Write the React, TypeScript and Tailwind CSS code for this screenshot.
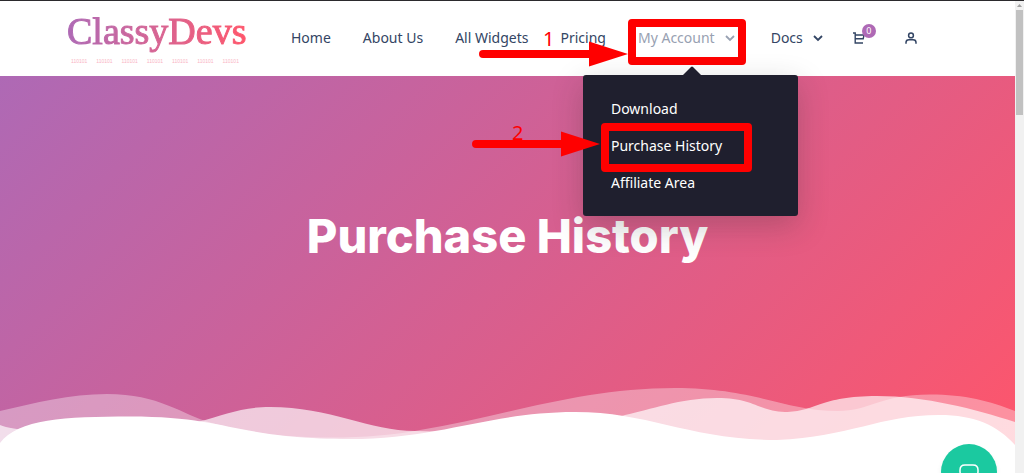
import type { ReactNode } from "react";

const accountLinks = ["Download", "Purchase History", "Affiliate Area"];

function Chevron() {
  return (
    <svg className="h-[10px] w-[10px]" viewBox="0 0 10 10" fill="none" stroke="currentColor" strokeWidth="1.8" aria-hidden="true">
      <path d="M1 3l4 4 4-4" />
    </svg>
  );
}

type ArrowProps = {
  label: string;
  className: string;
  length: number;
  labelClassName: string;
};

function Arrow({ label, className, length, labelClassName }: ArrowProps) {
  return (
    <div className={`pointer-events-none absolute z-20 text-[#ff0000] ${className}`}>
      <span className={`absolute text-[20px] leading-6 ${labelClassName}`}>{label}</span>
      <svg width={length} height="26" viewBox={`0 0 ${length} 26`} fill="currentColor" aria-hidden="true">
        <path d={`M4 9H${length - 39}V0.5L${length} 13L${length - 39} 25.5V17H4A4 4 0 0 1 4 9Z`} />
      </svg>
    </div>
  );
}

function Logo() {
  return (
    <a href="#" className="block w-[180px] shrink-0 pb-1" aria-label="ClassyDevs">
      <span className="block bg-linear-to-r from-[#ae69b5] to-[#ff556a] bg-clip-text font-['Liberation_Serif',serif] text-[38px] leading-[44px] text-transparent [-webkit-text-stroke:1px_transparent]">
        ClassyDevs
      </span>
      <span className="flex justify-between pt-1 pr-2 pl-1 font-['Liberation_Sans',sans-serif] text-[5px] leading-[8px] text-[#f9b4c4]">
        {[0, 1, 2, 3, 4, 5, 6].map((n) => (
          <span key={n}>110101</span>
        ))}
      </span>
    </a>
  );
}

function NavLink({ children }: { children: ReactNode }) {
  return (
    <a href="#" className="hover:text-[#9aa3b5]">
      {children}
    </a>
  );
}

function AccountMenu() {
  return (
    <div className="relative">
      <button type="button" aria-expanded="true" className="flex items-center gap-2.5 pr-1 text-[#98a1b2]">
        My Account
        <Chevron />
      </button>
      <div className="pointer-events-none absolute -top-[7px] -left-[10px] h-[46px] w-[118px] rounded-[4px] border-8 border-[#ff0000]" />
      <Arrow label="1" length={149} className="top-[15px] -left-[159px]" labelClassName="-top-[14px] left-16" />

      <div className="absolute top-[49px] -left-[55px] w-[215px] rounded-[3px] bg-[#1f1f2e] px-7 py-[15px] text-white shadow-[0_10px_30px_rgba(45,45,45,0.25)]">
        <svg className="absolute -top-[9px] left-[99px]" width="20" height="10" viewBox="0 0 20 10" fill="#1f1f2e" aria-hidden="true">
          <path d="M0 10L9 1Q10 0 11 1L20 10Z" />
        </svg>
        <ul>
          {accountLinks.map((link) => (
            <li key={link} className="py-[7px]">
              <a href="#" className="block leading-[23px]">
                {link}
              </a>
            </li>
          ))}
        </ul>
        <div className="pointer-events-none absolute top-12 left-[18px] h-[49px] w-[151px] rounded-[4px] border-8 border-[#ff0000]" />
        <Arrow label="2" length={128} className="top-14 -left-[111px]" labelClassName="-top-[10px] left-10" />
      </div>
    </div>
  );
}

function Header() {
  return (
    <header className="relative z-10 flex h-[76px] items-center border-t border-[#2b2a2d] bg-white pl-[67px] whitespace-nowrap">
      <Logo />
      <nav className="ml-11 flex items-center gap-8 pb-0.5 text-[14px] leading-6 text-[#334564]">
        <NavLink>Home</NavLink>
        <NavLink>About Us</NavLink>
        <NavLink>All Widgets</NavLink>
        <NavLink>Pricing</NavLink>
        <AccountMenu />
        <button type="button" className="flex items-center gap-2.5">
          Docs
          <Chevron />
        </button>
        <div className="-ml-0.5 flex items-center gap-10">
          <a href="#" aria-label="Cart" className="relative">
            <svg width="12" height="12" viewBox="0 0 12 12" fill="none" stroke="currentColor" strokeWidth="1.4" aria-hidden="true">
              <path d="M0 1H2.2V11H10M2.2 3H11L10.2 6.8H2.2" />
            </svg>
            <span className="absolute -top-2 left-[9px] flex h-[14px] w-[14px] items-center justify-center rounded-full bg-[#ae69b5] text-[9px] text-white">
              0
            </span>
          </a>
          <a href="#" aria-label="Profile">
            <svg width="12" height="12" viewBox="0 0 12 12" fill="none" stroke="currentColor" strokeWidth="1.5" aria-hidden="true">
              <circle cx="6" cy="3.4" r="2.4" />
              <path d="M1 11.8V10.5Q1 7.8 4 7.8H8Q11 7.8 11 10.5V11.8" />
            </svg>
          </a>
        </div>
      </nav>
    </header>
  );
}

function Waves() {
  return (
    <svg className="mt-auto block h-[103px] w-full" viewBox="0 0 1015 103" preserveAspectRatio="none" fill="#fff" aria-hidden="true">
      <path
        fillOpacity="0.35"
        d="M0 41C35 33 70 24 107 24C160 24 180 44 212 53C270 71 365 71 420 60C500 47 580 18 675 18C755 18 785 41 838 41C870 41 880 24.500 930 24.500C965 24.500 990 31 1015 41V103H0Z"
      />
      <path
        fillOpacity="0.67"
        d="M0 55Q10 59 35 61C120 72 160 60 197 52C225 45 240 37 270 37C330 37 370 61 415 61C500 64 570 64 625 45C650 40 680 28 717 28C755 28 760 42 785 42C815 42 820 26 877 26C925 26 975 39 1015 52V103H0Z"
      />
      <path d="M0 73C18 49 65 46.500 130 46.500C230 46.500 235 69 350 69C440 69 490 42 575 42C650 42 690 70 777 70C850 67 880 45 939 45C975 45 997 55 1015 75V103H0Z" />
    </svg>
  );
}

function Scrollbar() {
  return (
    <div className="flex w-[9px] shrink-0 flex-col items-center border-t border-[#2b2a2d] bg-[#f1f1f1]" aria-hidden="true">
      <svg className="my-[3px]" width="5" height="3" viewBox="0 0 5 3" fill="#a0a0a0">
        <path d="M0 3L2.500 0L5 3Z" />
      </svg>
      <div className="h-[105px] w-[7px] bg-[#c1c1c1]" />
    </div>
  );
}

function App() {
  return (
    <div className="flex min-h-screen overflow-hidden bg-white font-['Noto_Sans',sans-serif]">
      <div className="flex min-w-0 flex-1 flex-col">
        <Header />
        <main className="flex flex-1 flex-col bg-[linear-gradient(135deg,#ae69b5,#ff556a)]">
          <h1 className="pt-[136px] text-center font-['Inter',sans-serif] text-[47px] leading-[48px] font-extrabold text-white">
            Purchase History
          </h1>
          <Waves />
        </main>
      </div>
      <Scrollbar />

      <button
        type="button"
        aria-label="Open chat"
        className="fixed right-[27px] -bottom-[27px] z-20 flex h-14 w-14 items-center justify-center rounded-full bg-[#1bc9a0] shadow-md"
      >
        <svg width="20" height="16" viewBox="0 0 20 16" fill="none" stroke="#fff" strokeWidth="1.5" aria-hidden="true">
          <path d="M6 1H14Q19 1 19 6V8Q19 12 14 13L10 15L6 13Q1 12 1 8V6Q1 1 6 1Z" />
        </svg>
      </button>
    </div>
  );
}

export default App;
